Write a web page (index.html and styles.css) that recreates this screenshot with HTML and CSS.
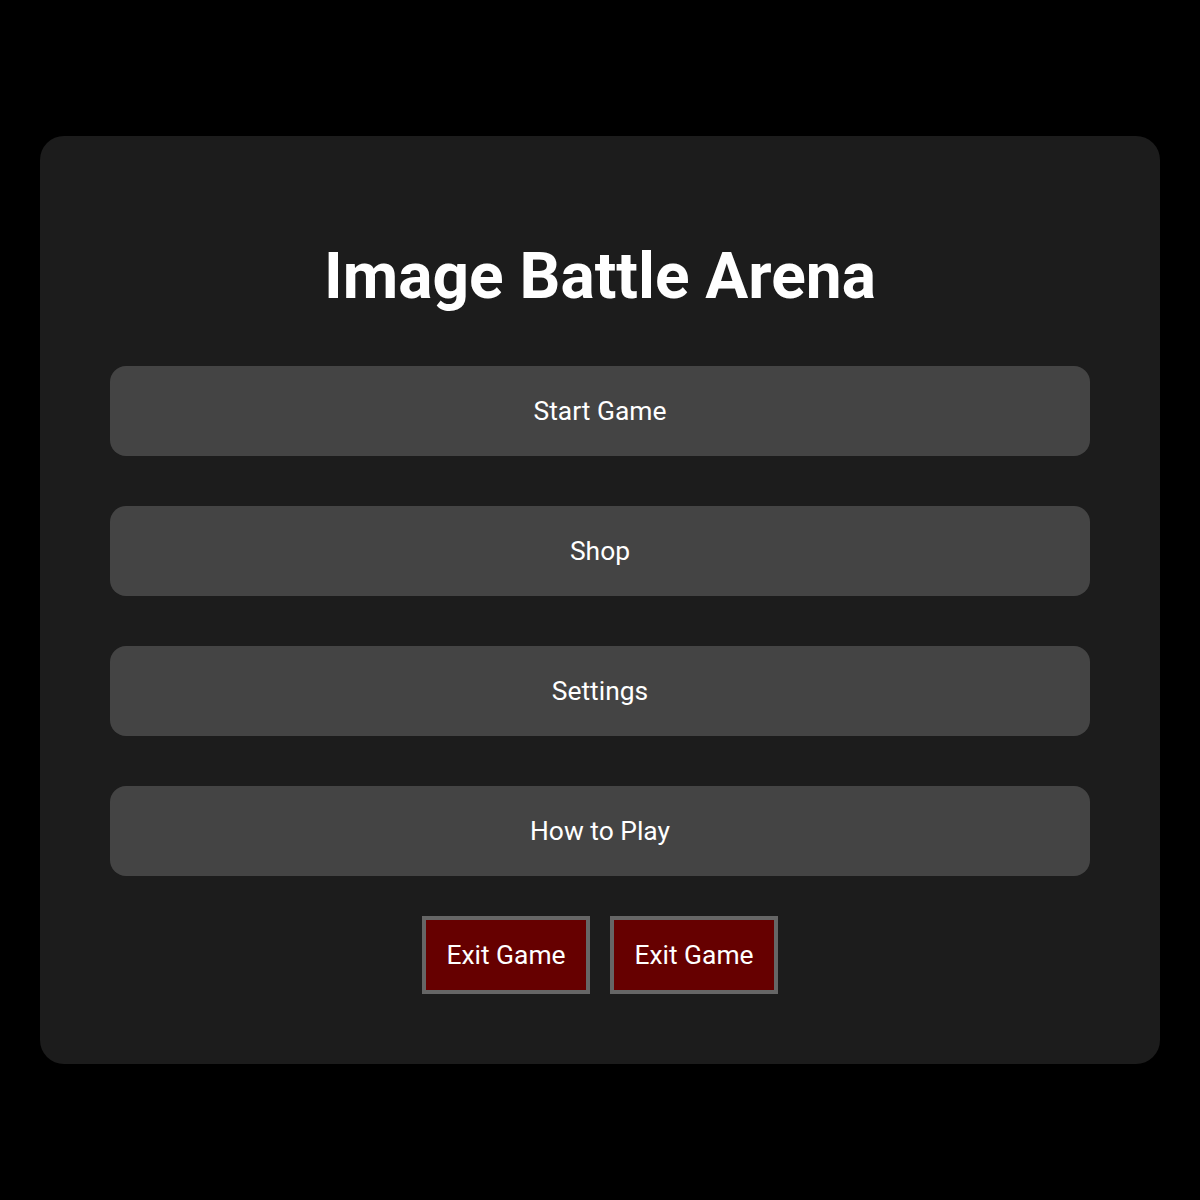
FILE: index.html
```html
<!DOCTYPE html>
<html lang="en">
<head>
  <meta charset="UTF-8" />
  <meta name="viewport" content="width=device-width, initial-scale=1.0"/>
  <title>Image Battle Arena</title>
  <link rel="stylesheet" href="styles.css">
</head>
<body>

<div class="menu">
  <h1>Image Battle Arena</h1>

  <div class="menuButtons">
    <button class="menuBtn">Start Game</button>
    <button class="menuBtn">Shop</button>
    <button class="menuBtn">Settings</button>
    <button class="menuBtn">How to Play</button>
  </div>

  <div class="exitRow">
    <button class="exitBtn">Exit Game</button>
    <button class="exitBtn">Exit Game</button>
  </div>
</div>

</body>
</html>
```

FILE: styles.css
```css
body { font-family: Roboto, "Noto Sans", sans-serif; margin: 0; background: #000; height: 1200px; display: flex; align-items: center; justify-content: center; }

.menu { width: 1120px; box-sizing: border-box; background: #1c1c1c; border-radius: 24px; padding: 70px; }
.menu h1 { color: white; text-align: center; font-size: 64px; font-weight: 700; margin: 33px 0 52px; line-height: 75px; }

.menuButtons { display: flex; flex-direction: column; gap: 50px; }
.menuBtn { height: 90px; background: #444; color: white; border: none; border-radius: 16px; font-family: inherit; font-size: 26.4px; }

.exitRow { display: flex; justify-content: center; gap: 20px; margin-top: 40px; }
.exitBtn { width: 168px; height: 78px; background: #660000; color: white; border: 4px solid #666; font-family: inherit; font-size: 26.4px; padding: 0; }
```
